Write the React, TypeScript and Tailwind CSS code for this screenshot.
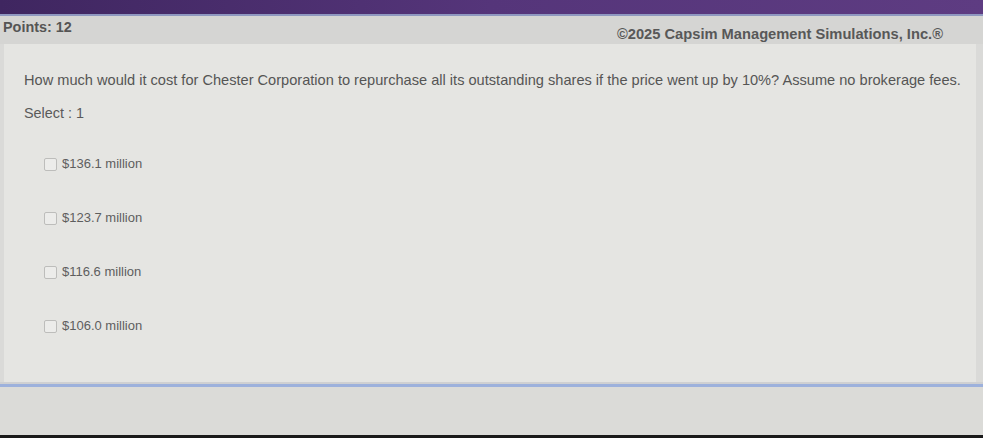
const answers = ["$136.1 million", "$123.7 million", "$116.6 million", "$106.0 million"];

function Choice({ label }: { label: string }) {
  return (
    <label className="flex items-center gap-[5px] h-[54px]">
      <span className="w-[13px] h-[13px] rounded-[2px] border border-[#bdbdbb] bg-[#ececea]" />
      <span className="text-[13px] text-[#5e5e5e]">{label}</span>
    </label>
  );
}

export default function App() {
  return (
    <div className="w-[983px] h-[438px] overflow-hidden flex flex-col bg-[#dadad8] font-['Liberation_Sans',Arial,sans-serif]">
      <div className="h-[14px] bg-gradient-to-r from-[#3f2660] via-[#55357a] to-[#5e3c82]" />
      <div className="h-[2px] bg-[#8f98c0]" />
      <div className="h-[28px] flex justify-between items-start bg-[#d5d5d3] pl-[3px] pr-[40px]">
        <span className="pt-[1px] text-[14.4px] font-bold text-[#555]">Points: 12</span>
        <span className="pt-[7px] text-[14.7px] font-bold text-[#585858]">
          ©2025 Capsim Management Simulations, Inc.®
        </span>
      </div>
      <div className="h-[338px] mx-[4px] mr-[7px] bg-[#e5e5e2] pt-[28px] pl-[20px]">
        <p className="text-[14.6px] text-[#555] leading-[17px]">
          How much would it cost for Chester Corporation to repurchase all its outstanding shares if the price went up by 10%? Assume no brokerage fees.
        </p>
        <p className="mt-[16px] text-[14.4px] text-[#5a5a5a] leading-[17px]">Select : 1</p>
        <div className="mt-[15px] pl-[20px] flex flex-col">
          {answers.map((a) => (
            <Choice key={a} label={a} />
          ))}
        </div>
      </div>
      <div className="h-[2px] bg-[#cfd0d2]" />
      <div className="h-[3px] bg-[#9db1dc]" />
      <div className="flex-1 bg-[#dbdbd8]" />
      <div className="h-[3px] bg-[#1a1a1a]" />
    </div>
  );
}
